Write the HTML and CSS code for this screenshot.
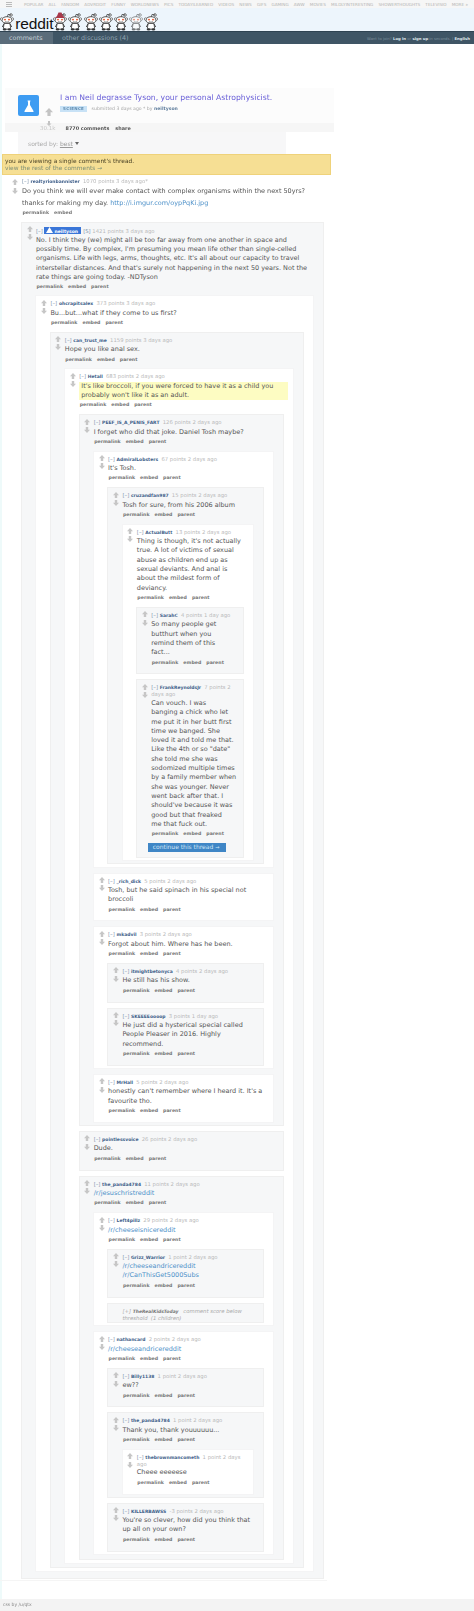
FILE: index.html
```html
<!DOCTYPE html>
<html lang="en">
<head>
<meta charset="utf-8">
<title>reddit</title>
<link rel="stylesheet" href="styles.css">
</head>
<body>
<svg class="defs" width="0" height="0">
  <defs>
    <symbol id="up" viewBox="0 0 8 8"><path d="M4 0 8 4.2H5.6V8H2.4V4.2H0Z"/></symbol>
    <symbol id="down" viewBox="0 0 8 8"><path d="M4 8 8 3.8H5.6V0H2.4V3.8H0Z"/></symbol>
    <symbol id="snoo" viewBox="0 0 14 18">
      <circle cx="11" cy="2" r="1.3" fill="#fff" stroke="#333" stroke-width=".7"/>
      <path d="M7 5 8 1.4 11 2" fill="none" stroke="#333" stroke-width=".7"/>
      <ellipse cx="7" cy="7" rx="5.2" ry="3.3" fill="#fff" stroke="#333" stroke-width=".8"/>
      <circle cx="1.6" cy="6" r="1.2" fill="#fff" stroke="#333" stroke-width=".6"/>
      <circle cx="12.4" cy="6" r="1.2" fill="#fff" stroke="#333" stroke-width=".6"/>
      <circle cx="5" cy="6.6" r=".9" fill="#e8481c"/>
      <circle cx="9" cy="6.6" r=".9" fill="#e8481c"/>
      <path d="M5 8.6Q7 9.7 9 8.6" fill="none" stroke="#333" stroke-width=".5"/>
      <path d="M4 10.4H10L10.6 15.5Q7 17 3.4 15.5Z" fill="#fff" stroke="#333" stroke-width=".8"/>
      <path d="M4 11 2.3 14M10 11 11.7 14" stroke="#333" stroke-width=".9" fill="none"/>
      <ellipse cx="4.6" cy="16.6" rx="1.9" ry="1" fill="#333"/>
      <ellipse cx="9.4" cy="16.6" rx="1.9" ry="1" fill="#333"/>
    </symbol>
    <symbol id="hat" viewBox="0 0 14 6"><path d="M2 6H12L10 4 8.5 .5H5.5L4 4Z" fill="#a8384a"/></symbol>
  </defs>
</svg>

<header class="site-header">
  <nav class="srbar">
    <span class="menu-icon"><i></i><i></i><i></i></span>
    <span>POPULAR</span><span>ALL</span><span>FANDOM</span><span>ADVRDDIT</span><span>FUNNY</span><span>WORLDNEWS</span><span>PICS</span><span>TODAYILEARNED</span><span>VIDEOS</span><span>NEWS</span><span>GIFS</span><span>GAMING</span><span>AWW</span><span>MOVIES</span><span>MILDLYINTERESTING</span><span>SHOWERTHOUGHTS</span><span>TELEVISIO</span><span class="more">MORE »</span>
  </nav>
  <div class="logo-row">
    <svg class="snoo"><use href="#snoo"/></svg>
    <span class="wordmark">reddit</span>
    <span class="snoo-wrap"><svg class="snoo"><use href="#snoo"/></svg><svg class="hat"><use href="#hat"/></svg></span>
    <svg class="snoo"><use href="#snoo"/></svg>
    <svg class="snoo"><use href="#snoo"/></svg>
    <svg class="snoo"><use href="#snoo"/></svg>
    <svg class="snoo"><use href="#snoo"/></svg>
    <svg class="snoo tint"><use href="#snoo"/></svg>
    <svg class="snoo"><use href="#snoo"/></svg>
  </div>
  <div class="tabbar">
    <span class="tab active">comments</span>
    <span class="tab">other discussions (4)</span>
    <span class="userbar">Want to join? <b>Log in</b> or <b>sign up</b> in seconds. | <b>English</b></span>
  </div>
</header>

<section class="post">
  <div class="thumb">
    <svg width="14" height="14" viewBox="0 0 14 14"><path d="M5.6 1.5H8.4V2.5H8V6L11.5 12Q12 13 11 13H3Q2 13 2.5 12L6 6V2.5H5.6Z" fill="#fff"/></svg>
  </div>
  <div class="post-vote">
    <svg class="big-arrow"><use href="#up"/></svg>
    <svg class="big-arrow low"><use href="#down"/></svg>
    <span class="score">30.1k</span>
  </div>
  <div class="post-main">
    <div class="post-title">I am Neil degrasse Tyson, your personal Astrophysicist.</div>
    <div class="post-meta"><span class="flair">SCIENCE</span> submitted 3 days ago * by <b>neiltyson</b></div>
  </div>
</section>
<div class="post-buttons"><b>8770 comments</b><b>share</b></div>
<div class="sort-bar">sorted by: <u>best</u> <span class="caret"></span></div>
<div class="notice">
  <div>you are viewing a single comment's thread.</div>
  <div class="notice-link">view the rest of the comments →</div>
</div>

<main class="thread">
  <article class="comment root">
    <div class="tagline"><span class="tog">[–]</span> <b>realtyrionbannister</b> 1070 points 3 days ago*</div>
    <div class="votes"><svg><use href="#up"/></svg><svg><use href="#down"/></svg></div>
    <p class="body">Do you think we will ever make contact with complex organisms within the next 50yrs?</p>
    <p class="body second">thanks for making my day. <a>http://i.imgur.com/oypPqKi.jpg</a></p>
    <div class="actions"><b>permalink</b><b>embed</b></div>

    <article class="comment tint neil">
      <div class="tagline"><span class="tog">[–]</span> <b class="op"><svg width="7" height="6" viewBox="0 0 7 6"><path d="M3.5 0 7 6H0Z" fill="#fff"/></svg> neiltyson</b> <span class="tog">[S]</span> 1421 points 3 days ago</div>
      <div class="votes"><svg><use href="#up"/></svg><svg><use href="#down"/></svg></div>
      <p class="body">No. I think they (we) might all be too far away from one another in space and possibly time. By complex, I'm presuming you mean life other than single-celled organisms. Life with legs, arms, thoughts, etc. It's all about our capacity to travel interstellar distances. And that's surely not happening in the next 50 years. Not the rate things are going today. -NDTyson</p>
      <div class="actions"><b>permalink</b><b>embed</b><b>parent</b></div>

      <article class="comment tail">
        <div class="tagline"><span class="tog">[–]</span> <b>ohcrapitsalex</b> 373 points 3 days ago</div>
        <div class="votes"><svg><use href="#up"/></svg><svg><use href="#down"/></svg></div>
        <p class="body">Bu...but...what if they come to us first?</p>
        <div class="actions"><b>permalink</b><b>embed</b><b>parent</b></div>

        <article class="comment tint tail">
          <div class="tagline"><span class="tog">[–]</span> <b>can_trust_me</b> 1159 points 3 days ago</div>
          <div class="votes"><svg><use href="#up"/></svg><svg><use href="#down"/></svg></div>
          <p class="body">Hope you like anal sex.</p>
          <div class="actions"><b>permalink</b><b>embed</b><b>parent</b></div>

          <article class="comment tail">
            <div class="tagline"><span class="tog">[–]</span> <b>Hetall</b> 683 points 2 days ago</div>
            <div class="votes"><svg><use href="#up"/></svg><svg><use href="#down"/></svg></div>
            <p class="body highlight">It's like broccoli, if you were forced to have it as a child you probably won't like it as an adult.</p>
            <div class="actions"><b>permalink</b><b>embed</b><b>parent</b></div>

            <article class="comment tint">
              <div class="tagline"><span class="tog">[–]</span> <b>PEEF_IS_A_PENIS_FART</b> 126 points 2 days ago</div>
              <div class="votes"><svg><use href="#up"/></svg><svg><use href="#down"/></svg></div>
              <p class="body">I forget who did that joke. Daniel Tosh maybe?</p>
              <div class="actions"><b>permalink</b><b>embed</b><b>parent</b></div>

              <article class="comment">
                <div class="tagline"><span class="tog">[–]</span> <b>AdmiralLobsters</b> 67 points 2 days ago</div>
                <div class="votes"><svg><use href="#up"/></svg><svg><use href="#down"/></svg></div>
                <p class="body">It's Tosh.</p>
                <div class="actions"><b>permalink</b><b>embed</b><b>parent</b></div>

                <article class="comment tint">
                  <div class="tagline"><span class="tog">[–]</span> <b>cruzandfan987</b> 15 points 2 days ago</div>
                  <div class="votes"><svg><use href="#up"/></svg><svg><use href="#down"/></svg></div>
                  <p class="body">Tosh for sure, from his 2006 album</p>
                  <div class="actions"><b>permalink</b><b>embed</b><b>parent</b></div>

                  <article class="comment">
                    <div class="tagline"><span class="tog">[–]</span> <b>ActualButt</b> 13 points 2 days ago</div>
                    <div class="votes"><svg><use href="#up"/></svg><svg><use href="#down"/></svg></div>
                    <p class="body">Thing is though, it's not actually true. A lot of victims of sexual abuse as children end up as sexual deviants. And anal is about the mildest form of deviancy.</p>
                    <div class="actions"><b>permalink</b><b>embed</b><b>parent</b></div>

                    <article class="comment tint">
                      <div class="tagline"><span class="tog">[–]</span> <b>SarahC</b> 4 points 1 day ago</div>
                      <div class="votes"><svg><use href="#up"/></svg><svg><use href="#down"/></svg></div>
                      <p class="body">So many people get butthurt when you remind them of this fact...</p>
                      <div class="actions"><b>permalink</b><b>embed</b><b>parent</b></div>
                    </article>

                    <article class="comment tint">
                      <div class="tagline"><span class="tog">[–]</span> <b>FrankReynoldsJr</b> 7 points 2 days ago</div>
                      <div class="votes"><svg><use href="#up"/></svg><svg><use href="#down"/></svg></div>
                      <p class="body lines">Can vouch. I was<br>banging a chick who let<br>me put it in her butt first<br>time we banged. She<br>loved it and told me that.<br>Like the 4th or so "date"<br>she told me she was<br>sodomized multiple times<br>by a family member when<br>she was younger. Never<br>went back after that. I<br>should've because it was<br>good but that freaked<br>me that fuck out.</p>
                      <div class="actions"><b>permalink</b><b>embed</b><b>parent</b></div>
                      <div class="continue">continue this thread <span class="cont-arrow">→</span></div>
                    </article>
                  </article>
                </article>
              </article>

              <article class="comment">
                <div class="tagline"><span class="tog">[–]</span> <b>_rich_dick</b> 5 points 2 days ago</div>
                <div class="votes"><svg><use href="#up"/></svg><svg><use href="#down"/></svg></div>
                <p class="body">Tosh, but he said spinach in his special not broccoli</p>
                <div class="actions"><b>permalink</b><b>embed</b><b>parent</b></div>
              </article>

              <article class="comment">
                <div class="tagline"><span class="tog">[–]</span> <b>mkadvil</b> 3 points 2 days ago</div>
                <div class="votes"><svg><use href="#up"/></svg><svg><use href="#down"/></svg></div>
                <p class="body">Forgot about him. Where has he been.</p>
                <div class="actions"><b>permalink</b><b>embed</b><b>parent</b></div>

                <article class="comment tint">
                  <div class="tagline"><span class="tog">[–]</span> <b>itmightbetonyca</b> 4 points 2 days ago</div>
                  <div class="votes"><svg><use href="#up"/></svg><svg><use href="#down"/></svg></div>
                  <p class="body">He still has his show.</p>
                  <div class="actions"><b>permalink</b><b>embed</b><b>parent</b></div>
                </article>

                <article class="comment tint">
                  <div class="tagline"><span class="tog">[–]</span> <b>SKEEEEoooop</b> 3 points 1 day ago</div>
                  <div class="votes"><svg><use href="#up"/></svg><svg><use href="#down"/></svg></div>
                  <p class="body">He just did a hysterical special called People Pleaser in 2016. Highly recommend.</p>
                  <div class="actions"><b>permalink</b><b>embed</b><b>parent</b></div>
                </article>
              </article>

              <article class="comment">
                <div class="tagline"><span class="tog">[–]</span> <b>MrHall</b> 5 points 2 days ago</div>
                <div class="votes"><svg><use href="#up"/></svg><svg><use href="#down"/></svg></div>
                <p class="body">honestly can't remember where I heard it. It's a favourite tho.</p>
                <div class="actions"><b>permalink</b><b>embed</b><b>parent</b></div>
              </article>
            </article>

            <article class="comment tint">
              <div class="tagline"><span class="tog">[–]</span> <b>pointlessvoice</b> 26 points 2 days ago</div>
              <div class="votes"><svg><use href="#up"/></svg><svg><use href="#down"/></svg></div>
              <p class="body">Dude.</p>
              <div class="actions"><b>permalink</b><b>embed</b><b>parent</b></div>
            </article>

            <article class="comment tint tail-wide">
              <div class="tagline"><span class="tog">[–]</span> <b>the_panda4784</b> 11 points 2 days ago</div>
              <div class="votes"><svg><use href="#up"/></svg><svg><use href="#down"/></svg></div>
              <p class="body"><a>/r/jesuschristreddit</a></p>
              <div class="actions"><b>permalink</b><b>embed</b><b>parent</b></div>

              <article class="comment">
                <div class="tagline"><span class="tog">[–]</span> <b>Left4pillz</b> 29 points 2 days ago</div>
                <div class="votes"><svg><use href="#up"/></svg><svg><use href="#down"/></svg></div>
                <p class="body"><a>/r/cheeseisnicereddit</a></p>
                <div class="actions"><b>permalink</b><b>embed</b><b>parent</b></div>

                <article class="comment tint">
                  <div class="tagline"><span class="tog">[–]</span> <b>Grizz_Warrior</b> 1 point 2 days ago</div>
                  <div class="votes"><svg><use href="#up"/></svg><svg><use href="#down"/></svg></div>
                  <p class="body"><a>/r/cheeseandricereddit</a><br><a>/r/CanThisGet5000Subs</a></p>
                  <div class="actions"><b>permalink</b><b>embed</b><b>parent</b></div>
                </article>

                <article class="comment tint collapsed">
                  <div class="tagline">[+] <b>TheRealKidsToday</b> &nbsp;comment score below threshold &nbsp;(1 children)</div>
                </article>
              </article>

              <article class="comment">
                <div class="tagline"><span class="tog">[–]</span> <b>nathancard</b> 2 points 2 days ago</div>
                <div class="votes"><svg><use href="#up"/></svg><svg><use href="#down"/></svg></div>
                <p class="body"><a>/r/cheeseandricereddit</a></p>
                <div class="actions"><b>permalink</b><b>embed</b><b>parent</b></div>

                <article class="comment tint">
                  <div class="tagline"><span class="tog">[–]</span> <b>Billy1138</b> 1 point 2 days ago</div>
                  <div class="votes"><svg><use href="#up"/></svg><svg><use href="#down"/></svg></div>
                  <p class="body">ew??</p>
                  <div class="actions"><b>permalink</b><b>embed</b><b>parent</b></div>
                </article>

                <article class="comment tint">
                  <div class="tagline"><span class="tog">[–]</span> <b>the_panda4784</b> 1 point 2 days ago</div>
                  <div class="votes"><svg><use href="#up"/></svg><svg><use href="#down"/></svg></div>
                  <p class="body">Thank you, thank youuuuuu...</p>
                  <div class="actions"><b>permalink</b><b>embed</b><b>parent</b></div>

                  <article class="comment">
                    <div class="tagline"><span class="tog">[–]</span> <b>thebrownmancometh</b> 1 point 2 days ago</div>
                    <div class="votes"><svg><use href="#up"/></svg><svg><use href="#down"/></svg></div>
                    <p class="body">Cheee eeeeese</p>
                    <div class="actions"><b>permalink</b><b>embed</b><b>parent</b></div>
                  </article>
                </article>

                <article class="comment tint">
                  <div class="tagline"><span class="tog">[–]</span> <b>KILLERBAWSS</b> -3 points 2 days ago</div>
                  <div class="votes"><svg><use href="#up"/></svg><svg><use href="#down"/></svg></div>
                  <p class="body">You're so clever, how did you think that up all on your own?</p>
                  <div class="actions"><b>permalink</b><b>embed</b><b>parent</b></div>
                </article>
              </article>
            </article>
          </article>
        </article>
      </article>
    </article>
  </article>
</main>
<footer class="footer">css by /u/qtx</footer>
</body>
</html>
```
FILE: styles.css
```css
* { box-sizing: border-box; }
html, body { margin: 0; padding: 0; }
body {
  width: 474px;
  height: 1611px;
  overflow: hidden;
  background: linear-gradient(90deg, #eefafa 2px, #fff 2px);
  color: #444;
  font-family: "DejaVu Sans", Verdana, sans-serif;
  font-size: 5px;
  display: flex;
  flex-direction: column;
  filter: blur(.35px);
}
.defs { position: absolute; }

.site-header { background: #edf5fc; height: 44px; flex: none; display: flex; flex-direction: column; }
.srbar {
  height: 8px; background: #f6f6f6; display: flex; align-items: center; gap: 5.2px;
  padding-left: 6px; color: #b3b3b3; font-size: 4.15px; white-space: nowrap; overflow: hidden;
}
.menu-icon { display: flex; flex-direction: column; gap: 1px; width: 6px; margin-right: 6.8px; }
.menu-icon i { display: block; height: 1px; background: #bbb; }
.logo-row { height: 23px; display: flex; align-items: flex-end; }
.snoo { display: block; width: 14px; height: 18px; margin-right: 1.2px; flex: none; }
.snoo.tint { opacity: .65; }
.snoo-wrap { position: relative; flex: none; }
.hat { position: absolute; left: 0; top: -1px; width: 14px; height: 6px; }
.wordmark {
  font-family: "Liberation Sans", Arial, sans-serif; font-size: 15.5px; line-height: 15px;
  color: #111; width: 37px; margin-right: 1px; letter-spacing: -.1px;
}
.tabbar {
  height: 13px; background: #3f5565; border-top: 1px solid #2f4352; display: flex; align-items: center;
  font-size: 6.4px; color: #8fa2af; white-space: nowrap;
}
.tab { padding: 0 9px; line-height: 12px; }
.tab.active { background: #5a6c7a; color: #c5cfd6; width: 53px; }
.userbar { margin-left: auto; padding-right: 4px; font-size: 3.8px; color: #7b8e9b; }
.userbar b { color: #dfe6ea; }

.post { margin: 44px 0 0 5px; width: 329px; height: 35px; background: #fcfcfc; display: flex; flex: none; padding-left: 13px; }
.thumb { width: 21px; height: 21px; margin-top: 7px; background: #3e9cf2; border-radius: 2px; display: flex; align-items: center; justify-content: center; flex: none; }
.post-vote { width: 21px; flex: none; position: relative; }
.big-arrow { display: block; width: 8px; height: 8px; fill: #c4c4c4; margin: 20px 0 0 6px; }
.big-arrow.low { margin-top: 5px; height: 5px; }
.score { position: absolute; left: 1px; top: 37px; font-size: 5.5px; color: #c8c8c8; white-space: nowrap; }
.post-main { padding-top: 4px; }
.post-title { font-size: 7.7px; line-height: 11px; color: #6a60d8; white-space: nowrap; }
.post-meta { margin-top: 3px; font-size: 4.6px; color: #a6a6a6; line-height: 6px; white-space: nowrap; }
.post-meta b { color: #5f7d9c; }
.flair { display: inline-block; background: #c8e2f6; color: #5d8bb0; font-weight: 700; font-size: 4px; padding: 0 3px; margin-right: 3px; letter-spacing: .3px; }
.post-buttons { margin-left: 5px; width: 329px; height: 9px; background: #f6f6f6; padding-left: 60.5px; display: flex; gap: 6px; align-items: center; font-size: 4.9px; color: #555; flex: none; }
.sort-bar { margin-left: 18px; width: 268px; height: 22px; background: #f7f7f8; padding-left: 10px; line-height: 24px; font-size: 6px; color: #aaa; flex: none; }
.sort-bar u { color: #999; }
.caret { display: inline-block; border: 2.5px solid transparent; border-top: 3px solid #666; border-bottom: 0; vertical-align: 1px; }
.notice { margin-left: 2px; width: 329px; height: 21px; background: #f6df94; border: 1px solid #efd27a; padding: 2.5px 2px; font-size: 5.9px; line-height: 7.3px; color: #4a4225; flex: none; }
.notice-link { color: #7d8f77; }

.thread { flex: none; }
.comment {
  position: relative;
  padding: 4px 0 2.1px 14px;
  margin: 0 9px 0 -.6px;
  background: #fff;
  border: 1px solid #f4f4f5;
}
.comment.tint { background: #f6f7f8; border-color: #efefef; }
.comment + .comment { margin-top: 5px; }
.comment.tail { padding-bottom: 3px; }
.comment.tail-wide { padding-bottom: 4.6px; }
.comment.root { border: 0; border-bottom: 1px solid #f5f5f5; background: none; margin: 0; width: 327px; padding: 3px 3px 1px 22px; }
.comment.neil { margin: 0 0 0 -1px; width: 303px; padding-top: 4.5px; padding-bottom: 5.5px; }
.neil > .actions { margin-bottom: 3px; }
.neil > .body { padding-right: 10px; }
.tagline { font-size: 5.3px; line-height: 6px; color: #b8b8b8; padding-right: 3px; }
.tagline b { color: #3f5f8a; font-size: 4.5px; margin-right: 1.5px; }
.tog { color: #7f95ad; }
.tagline .op { display: inline-block; min-width: 37px; line-height: 5.5px; background: #3a76d8; color: #fff; padding: 0 1.5px; margin-right: 0; }
.op svg { vertical-align: -.5px; }
.votes { position: absolute; left: 4.5px; top: 3.5px; display: flex; flex-direction: column; gap: 2.3px; }
.votes svg { display: block; width: 6px; height: 6px; fill: #c6c6c6; }
.root > .votes { left: 12px; top: 4px; gap: 3px; }
.body { margin: 1.5px 0 0; font-size: 6.48px; line-height: 9.33px; color: #555; padding-right: 8.5px; }
.body.lines { padding-right: 0; white-space: nowrap; }
.body.second { margin-top: 2.7px; }
.body a { color: #4e91c9; }
.highlight { background: #fdfcc2; margin-right: 5px; padding-left: 2px; padding-right: 5px; }
.actions { display: flex; gap: 5px; height: 10px; margin-bottom: 3.7px; font-size: 4.7px; line-height: 10px; color: #777; padding-left: .5px; }
.continue { margin: 0 0 3.5px -3.5px; width: 78px; height: 8.5px; background: #3f86c6; color: #cfe5f5; font-size: 6px; line-height: 8.5px; padding-left: 5px; white-space: nowrap; }
.cont-arrow { font-size: 5px; }
.collapsed { font-style: italic; padding-top: 4.5px; padding-bottom: 1px; }
.collapsed .tagline { color: #aaa; line-height: 6.1px; }
.collapsed b { color: #777; }

.footer { margin-top: auto; height: 12px; background: #f3f3f3; padding-left: 3px; font-size: 4.5px; line-height: 11px; color: #888; flex: none; }
```
